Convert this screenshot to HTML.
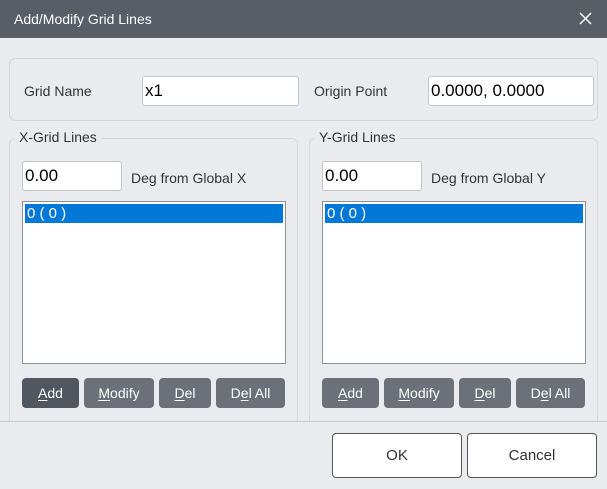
<html><head><style>
body{margin:0;width:607px;height:488px;background:#e9ebee;font-family:"Liberation Sans",sans-serif;position:relative;overflow:hidden}
.a{position:absolute}
.title{left:0;top:0;width:607px;height:38px;background:#585e66;color:#fff;font-size:14px}
.box{border:1px solid #d3d6db;border-radius:6px}
.inp{background:#fff;border:1px solid #c3c6cb;border-radius:3px;font-size:17px;color:#000;box-sizing:border-box;padding:4px 2px}
.lbl{font-size:14px;color:#333}
.leg{background:#e9ebee;padding:0 4px;font-size:14px;color:#333}
.list{background:#fff;border:1px solid #8e9196;box-sizing:border-box}
.sel{position:absolute;left:2px;right:2px;top:2px;height:19px;background:#0078d7;color:#fff;font-size:15px;line-height:19px;padding-left:2px}
.btn{background:#6b7079;color:#fff;border-radius:4px;font-size:14px;text-align:center;line-height:30px;height:30px;top:378px}
.btn u{text-underline-offset:2px}
.big{background:#fff;border:1px solid #555;border-radius:4px;box-sizing:border-box;text-align:center;line-height:43px;font-size:15px;color:#333;top:433px;height:45px;width:130px}
</style></head><body>
<div class="a title"><span class="a" style="left:14px;top:11px">Add/Modify Grid Lines</span>
<svg class="a" style="left:579px;top:12px" width="13" height="13"><path d="M1 1L12 12M12 1L1 12" stroke="#fff" stroke-width="1.5"/></svg></div>
<div class="a box" style="left:9px;top:58px;width:587px;height:61px"></div>
<span class="a lbl" style="left:24px;top:83px">Grid Name</span>
<div class="a inp" style="left:142px;top:76px;width:157px;height:30px">x1</div>
<span class="a lbl" style="left:314px;top:83px">Origin Point</span>
<div class="a inp" style="left:428px;top:76px;width:166px;height:30px">0.0000, 0.0000</div>

<div class="a box" style="left:9px;top:138px;width:287px;height:290px;border-bottom:none"></div>
<span class="a leg" style="left:15px;top:129px">X-Grid Lines</span>
<div class="a inp" style="left:22px;top:161px;width:100px;height:30px">0.00</div>
<span class="a lbl" style="left:131px;top:170px">Deg from Global X</span>
<div class="a list" style="left:22px;top:201px;width:264px;height:163px"><div class="sel">0 ( 0 )</div></div>
<div class="a btn" style="left:22px;width:57px;background:#51575f"><u>A</u>dd</div>
<div class="a btn" style="left:84px;width:70px"><u>M</u>odify</div>
<div class="a btn" style="left:159px;width:52px"><u>D</u>el</div>
<div class="a btn" style="left:216px;width:69px">D<u>e</u>l All</div>

<div class="a box" style="left:309px;top:138px;width:287px;height:290px;border-bottom:none"></div>
<span class="a leg" style="left:315px;top:129px">Y-Grid Lines</span>
<div class="a inp" style="left:322px;top:161px;width:100px;height:30px">0.00</div>
<span class="a lbl" style="left:431px;top:170px">Deg from Global Y</span>
<div class="a list" style="left:322px;top:201px;width:264px;height:163px"><div class="sel">0 ( 0 )</div></div>
<div class="a btn" style="left:322px;width:57px"><u>A</u>dd</div>
<div class="a btn" style="left:384px;width:70px"><u>M</u>odify</div>
<div class="a btn" style="left:459px;width:52px"><u>D</u>el</div>
<div class="a btn" style="left:516px;width:69px">D<u>e</u>l All</div>

<div class="a" style="left:0;top:421px;width:607px;height:67px;background:#e9ebee;border-top:1px solid #c5c9ce"></div>
<div class="a big" style="left:332px">OK</div>
<div class="a big" style="left:467px">Cancel</div>
</body></html>
